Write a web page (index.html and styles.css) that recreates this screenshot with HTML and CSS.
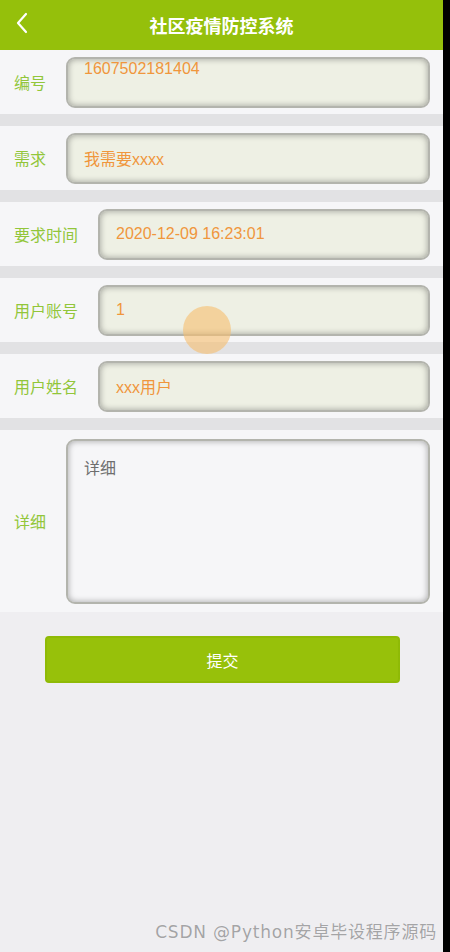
FILE: index.html
```html
<!DOCTYPE html>
<html lang="zh-CN">
    <head>
        <meta charset="UTF-8">
        <meta name="viewport" content="width=device-width, initial-scale=1.0">
        <title>社区疫情防控系统</title>
        <link rel="stylesheet" href="styles.css">
    </head>
    <body>
        <div class="page">
            <header class="topbar">
                <span class="back">
                    <svg width="14" height="22" viewBox="0 0 14 22"><path d="M11 2 L3 11 L11 20" fill="none" stroke="#fff" stroke-width="2.2" stroke-linecap="round" stroke-linejoin="round"/></svg>
                </span>
                <h1>社区疫情防控系统</h1>
            </header>

            <form class="form">
                <div class="row">
                    <label>编号</label>
                    <div class="field field-top">1607502181404</div>
                </div>
                <div class="row">
                    <label>需求</label>
                    <div class="field">我需要xxxx</div>
                </div>
                <div class="row">
                    <label>要求时间</label>
                    <div class="field">2020-12-09 16:23:01</div>
                </div>
                <div class="row">
                    <label>用户账号</label>
                    <div class="field">1</div>
                </div>
                <div class="row">
                    <label>用户姓名</label>
                    <div class="field">xxx用户</div>
                </div>
                <div class="row row-tall">
                    <label>详细</label>
                    <div class="field area">详细</div>
                </div>
                <div class="actions">
                    <button type="button" class="submit">提交</button>
                </div>
            </form>

            <div class="touch"></div>
            <footer class="mark">CSDN @Python安卓毕设程序源码</footer>
        </div>
    </body>
</html>
```

FILE: styles.css
```css
body {
    background: #000;
    margin: 0;
    font-family: "Liberation Sans", "Noto Sans CJK SC", sans-serif;
}
.page {
    background: #efeef1;
    display: flex;
    flex-direction: column;
    min-height: 952px;
    position: relative;
    width: 443px;
}
.topbar {
    align-items: center;
    background: #95c00b;
    display: flex;
    height: 50px;
    justify-content: center;
    position: relative;
}
.topbar h1 {
    color: #fff;
    font-size: 18px;
    font-weight: bold;
    margin: 0;
}
.back {
    display: flex;
    left: 15px;
    position: absolute;
    top: 12px;
}
.form {
    display: flex;
    flex-direction: column;
}
.row {
    align-items: center;
    background: #f6f6f8;
    box-sizing: content-box;
    display: flex;
    height: 64px;
    padding: 0 13px 0 14px;
}
.row + .row {
    border-top: 12px solid #e2e2e4;
}
.row label {
    color: #92c63a;
    flex: none;
    font-size: 16px;
    margin-right: 20px;
}
.field {
    align-items: center;
    background: #eef0e4;
    border: 2px solid #b3b4ad;
    border-radius: 9px;
    box-shadow: inset 0 0 6px rgba(0, 0, 0, 0.35);
    box-sizing: border-box;
    color: #f0963c;
    display: flex;
    flex: 1;
    font-size: 16px;
    height: 51px;
    padding: 0 16px;
}
.field-top {
    align-items: flex-start;
    line-height: 18px;
    padding-top: 1px;
}
.row.row-tall {
    height: 182px;
}
.area {
    align-items: flex-start;
    background: #f6f6f8;
    color: #6e6e6e;
    height: 165px;
    padding-top: 14px;
}
.actions {
    display: flex;
    padding: 24px 43px 0 45px;
}
.submit {
    background: #97c10a;
    border: 2px solid #8fba06;
    border-radius: 4px;
    color: #fff;
    font-family: inherit;
    font-size: 16px;
    height: 47px;
    width: 100%;
}
.touch {
    background: rgba(246, 190, 110, 0.6);
    border-radius: 50%;
    height: 48px;
    left: 183px;
    position: absolute;
    top: 306px;
    width: 48px;
}
.mark {
    color: #a4a4a6;
    font-family: "DejaVu Sans", "Noto Sans CJK SC", sans-serif;
    font-size: 17px;
    letter-spacing: 0.8px;
    margin-top: auto;
    padding: 0 6px 9px 0;
    text-align: right;
    text-shadow: 0 0 1px #fff;
}
```
